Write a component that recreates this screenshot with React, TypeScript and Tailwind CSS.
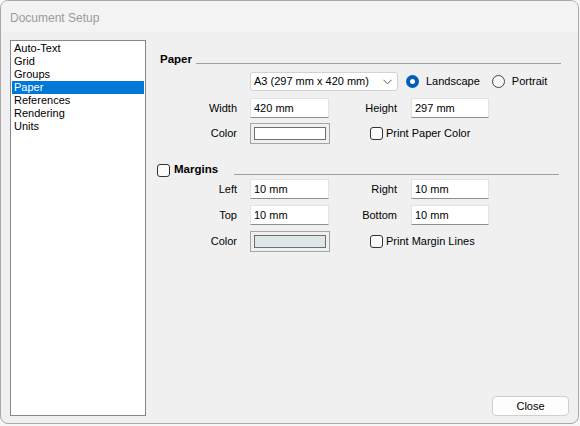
import type { ReactNode } from 'react'

const font = { fontFamily: '"Liberation Sans", Arial, sans-serif' }

const pages = ['Auto-Text', 'Grid', 'Groups', 'Paper', 'References', 'Rendering', 'Units']

function TextBox({ value, width }: { value: string; width: string }) {
  return (
    <div
      className={`${width} h-[20px] bg-white border border-[#e3e3e3] border-b-[#8e8e8e] flex items-center pl-[3px] text-[11px] text-black`}
    >
      {value}
    </div>
  )
}

function Label({ children, width }: { children: ReactNode; width: string }) {
  return <div className={`${width} text-right text-[11px] text-black`}>{children}</div>
}

function CheckBox() {
  return <div className="w-[13px] h-[13px] rounded-[3px] border border-[#333] bg-[#fbfbfb]" />
}

function ColorBox({ fill }: { fill: string }) {
  return (
    <div className="w-[80px] h-[21px] border border-[#a5a5a5] bg-[#f0f0f0] p-[3px]">
      <div className={`w-full h-full border border-[#6e6e6e] ${fill}`} />
    </div>
  )
}

function SectionHeader({ children, lineGap, lineRight }: { children: ReactNode; lineGap: string; lineRight: string }) {
  return (
    <div className="flex items-start h-[14px]">
      {children}
      <div className={`flex-1 h-px bg-[#a0a0a0] mt-[11px] ${lineGap} ${lineRight}`} />
    </div>
  )
}

export default function App() {
  return (
    <div className="w-[580px] h-[426px] bg-[#f7f7f7]" style={font}>
      <div className="w-[579px] h-[424px] rounded-[8px] border border-[#a8a8a8] bg-[#f0f0f0] flex flex-col overflow-hidden">
        <div className="h-[31px] bg-[#f3f3f3] flex items-center pl-[9px] pt-[2px] text-[12px] text-[#9b9b9b]">
          Document Setup
        </div>

        <div className="flex-1 flex pt-[8px]">
          <div className="ml-[9px] w-[136px] h-[376px] border border-[#828790] bg-white pt-[1px] px-[1px]">
            {pages.map((p) => (
              <div
                key={p}
                className={`h-[13px] leading-[13px] px-[2px] text-[11px] ${
                  p === 'Paper' ? 'bg-[#0078d7] text-white' : 'text-black'
                }`}
              >
                {p}
              </div>
            ))}
          </div>

          <div className="flex-1 ml-[4px] flex flex-col">
            <div className="mt-[12px]">
              <SectionHeader lineGap="ml-[4px]" lineRight="mr-[17px]">
                <div className="pl-[10px] text-[11.5px] font-bold leading-[14px] text-black">Paper</div>
              </SectionHeader>
            </div>

            <div className="mt-[6px] h-[19px] flex items-center">
              <div className="ml-[100px] w-[148px] h-[19px] bg-white border border-[#d2d2d2] rounded-[3px] flex items-center pl-[3px] pr-[5px] text-[11px] text-black">
                <span className="flex-1">A3 (297 mm x 420 mm)</span>
                <svg width="9" height="6" viewBox="0 0 9 6">
                  <path d="M0.5 0.8 L4.5 4.8 L8.5 0.8" fill="none" stroke="#555" strokeWidth="1" />
                </svg>
              </div>
              <div className="ml-[8px] w-[13px] h-[13px] rounded-full bg-[#005fb8] flex items-center justify-center">
                <div className="w-[5px] h-[5px] rounded-full bg-white" />
              </div>
              <span className="ml-[7px] text-[11px] text-black">Landscape</span>
              <div className="ml-[12px] w-[13px] h-[13px] rounded-full border border-[#444] bg-[#f7f7f7]" />
              <span className="ml-[7px] text-[11px] text-black">Portrait</span>
            </div>

            <div className="mt-[7px] h-[20px] flex items-center">
              <Label width="w-[87px]">Width</Label>
              <div className="ml-[13px]">
                <TextBox value="420 mm" width="w-[79px]" />
              </div>
              <Label width="w-[68px]">Height</Label>
              <div className="ml-[14px]">
                <TextBox value="297 mm" width="w-[78px]" />
              </div>
            </div>

            <div className="mt-[5px] h-[21px] flex items-center">
              <Label width="w-[87px]">Color</Label>
              <div className="ml-[13px]">
                <ColorBox fill="bg-white" />
              </div>
              <div className="ml-[40px]">
                <CheckBox />
              </div>
              <span className="ml-[3px] text-[11px] text-black">Print Paper Color</span>
            </div>

            <div className="mt-[19px]">
              <SectionHeader lineGap="ml-[16px]" lineRight="mr-[19px]">
                <div className="pl-[7px] flex items-center h-[14px]">
                  <CheckBox />
                  <span className="ml-[4px] text-[11.5px] font-bold text-black">Margins</span>
                </div>
              </SectionHeader>
            </div>

            <div className="mt-[2px] h-[20px] flex items-center">
              <Label width="w-[87px]">Left</Label>
              <div className="ml-[13px]">
                <TextBox value="10 mm" width="w-[79px]" />
              </div>
              <Label width="w-[68px]">Right</Label>
              <div className="ml-[14px]">
                <TextBox value="10 mm" width="w-[78px]" />
              </div>
            </div>

            <div className="mt-[6px] h-[20px] flex items-center">
              <Label width="w-[87px]">Top</Label>
              <div className="ml-[13px]">
                <TextBox value="10 mm" width="w-[79px]" />
              </div>
              <Label width="w-[68px]">Bottom</Label>
              <div className="ml-[14px]">
                <TextBox value="10 mm" width="w-[78px]" />
              </div>
            </div>

            <div className="mt-[6px] h-[21px] flex items-center">
              <Label width="w-[87px]">Color</Label>
              <div className="ml-[13px]">
                <ColorBox fill="bg-[#dde7e7]" />
              </div>
              <div className="ml-[40px]">
                <CheckBox />
              </div>
              <span className="ml-[3px] text-[11px] text-black">Print Margin Lines</span>
            </div>

            <div className="mt-auto mb-[7px] mr-[9px] self-end w-[77px] h-[20px] rounded-[4px] border border-[#cfcfcf] bg-[#fdfdfd] flex items-center justify-center text-[11px] text-black">
              Close
            </div>
          </div>
        </div>
      </div>
    </div>
  )
}
